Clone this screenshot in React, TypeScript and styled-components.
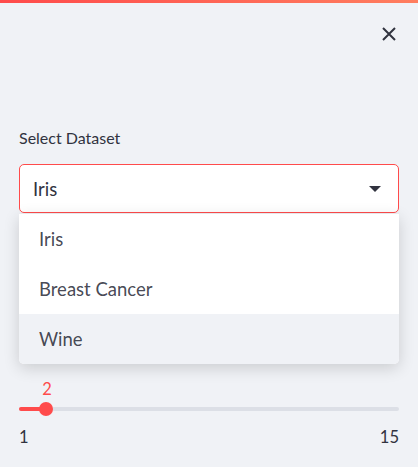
import React from 'react';
import styled, { createGlobalStyle } from 'styled-components';

const GlobalStyle = createGlobalStyle`
  html, body {
    margin: 0;
    padding: 0;
    background: #f0f2f6;
  }
  body {
    font-family: Lato, "Noto Sans", sans-serif;
    color: rgb(49, 51, 63);
  }
`;

const Sidebar = styled.div`
  position: relative;
  width: 418px;
  height: 467px;
  background: #f0f2f6;
  overflow: hidden;
`;

const TopBar = styled.div`
  height: 3px;
  background: linear-gradient(90deg, #ff4b4b, #ff7e5f);
`;

const Header = styled.div`
  display: flex;
  justify-content: flex-end;
  box-sizing: border-box;
  padding: 23px 21px 0 0;
  height: 120px;
`;

const CloseButton = styled.button`
  border: none;
  background: none;
  padding: 0;
  width: 16px;
  height: 16px;
  display: flex;
  align-items: center;
  justify-content: center;
  color: rgb(49, 51, 63);
`;

const Content = styled.div`
  padding: 0 19px;
  display: flex;
  flex-direction: column;
`;

const Label = styled.div`
  font-size: 16px;
  line-height: 20px;
  height: 20px;
  margin-top: 5px;
  margin-bottom: 16px;
`;

const SelectWrap = styled.div`
  position: relative;
`;

const SelectBox = styled.div`
  height: 49px;
  box-sizing: border-box;
  border: 1px solid #ff4b4b;
  border-radius: 5px;
  background: #ffffff;
  display: flex;
  align-items: center;
  justify-content: space-between;
  padding: 0 17px 0 13px;
  font-size: 18.5px;
`;

const Menu = styled.ul`
  position: absolute;
  top: 50px;
  left: 0;
  right: 0;
  margin: 0;
  padding: 0;
  list-style: none;
  background: #ffffff;
  border-radius: 0 0 5px 5px;
  box-shadow: 0 4px 16px rgba(0, 0, 0, 0.16);
  z-index: 2;
  overflow: hidden;
`;

const MenuItem = styled.li<{ $active?: boolean }>`
  height: 50px;
  display: flex;
  align-items: center;
  padding-left: 20px;
  font-size: 18.5px;
  color: rgba(49, 51, 63, 0.9);
  background: ${(p) => (p.$active ? '#f0f2f6' : '#ffffff')};
`;

const SliderBlock = styled.div`
  margin-top: 167px;
  display: flex;
  flex-direction: column;
`;

const ThumbValue = styled.div`
  color: #ff4b4b;
  font-size: 16.5px;
  line-height: 18px;
  height: 18px;
`;

const Track = styled.div`
  position: relative;
  margin-top: 9px;
  height: 4px;
  border-radius: 2px;
  background: #dcdfe6;
`;

const Fill = styled.div`
  height: 4px;
  border-radius: 2px;
  background: #ff4b4b;
`;

const Thumb = styled.div`
  position: absolute;
  top: -5px;
  width: 14px;
  height: 14px;
  border-radius: 50%;
  background: #ff4b4b;
  transform: translateX(-7px);
`;

const Ticks = styled.div`
  display: flex;
  justify-content: space-between;
  margin-top: 16px;
  font-size: 16.5px;
  line-height: 20px;
`;

export default function App() {
  const min = 1;
  const max = 15;
  const value = 2;
  const pct = ((value - min) / (max - min)) * 100;
  return (
    <>
      <GlobalStyle />
      <Sidebar>
        <TopBar />
        <Header>
          <CloseButton aria-label="Close">
            <svg width="14" height="14" viewBox="0 0 14 14">
              <path d="M1 1 L13 13 M13 1 L1 13" stroke="currentColor" strokeWidth="2" />
            </svg>
          </CloseButton>
        </Header>
        <Content>
          <Label>Select Dataset</Label>
          <SelectWrap>
            <SelectBox>
              <span>Iris</span>
              <svg width="12" height="6" viewBox="0 0 12 6">
                <path d="M0 0 L12 0 L6 6 Z" fill="rgb(49, 51, 63)" />
              </svg>
            </SelectBox>
            <Menu>
              <MenuItem>Iris</MenuItem>
              <MenuItem>Breast Cancer</MenuItem>
              <MenuItem $active>Wine</MenuItem>
            </Menu>
          </SelectWrap>
          <SliderBlock>
            <ThumbValue style={{ paddingLeft: `calc(${pct}% - 4px)` }}>{value}</ThumbValue>
            <Track>
              <Fill style={{ width: `${pct}%` }} />
              <Thumb style={{ left: `${pct}%` }} />
            </Track>
            <Ticks>
              <span>{min}</span>
              <span>{max}</span>
            </Ticks>
          </SliderBlock>
        </Content>
      </Sidebar>
    </>
  );
}
